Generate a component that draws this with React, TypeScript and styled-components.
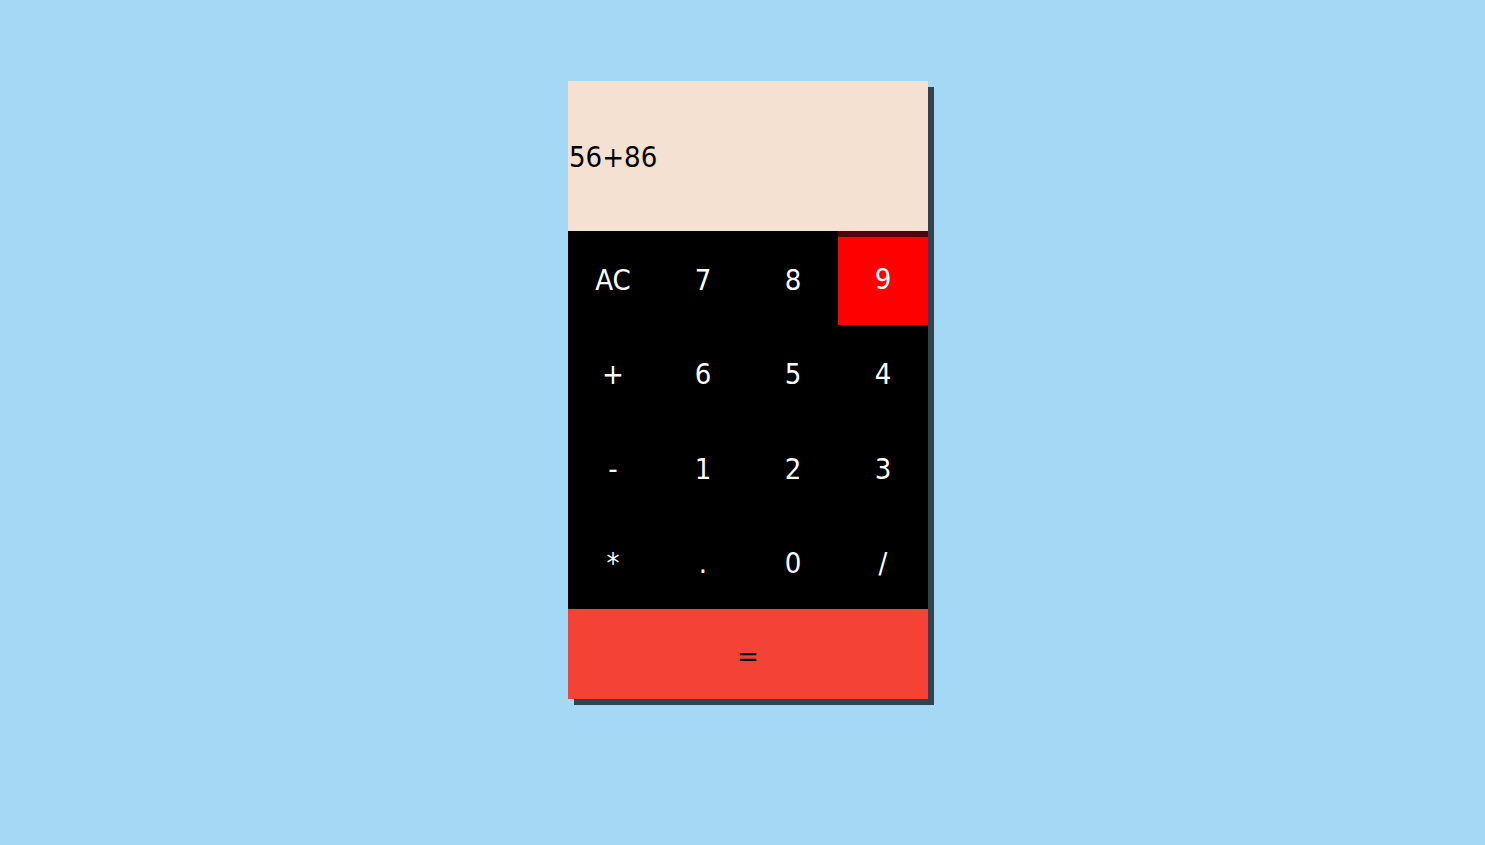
import React, { useState } from "react";
import styled, { createGlobalStyle } from "styled-components";

const Global = createGlobalStyle`
  html, body { margin: 0; padding: 0; }
  body {
    background: #a4d8f4;
    font-family: "DejaVu Sans Condensed", "DejaVu Sans", sans-serif;
    min-height: 845px;
  }
`;

const Page = styled.div`
  display: flex;
  justify-content: center;
  padding: 81px 0 0 11px;
`;

const Calculator = styled.div`
  width: 360px;
  display: flex;
  flex-direction: column;
  box-shadow: 6px 6px 0 #314550;
`;

const Display = styled.div`
  height: 150px;
  box-sizing: border-box;
  padding: 2px 0 0 1px;
  background: #f5e1d2;
  display: flex;
  align-items: center;
  font-size: 29px;
  color: #000;
`;

const Keys = styled.div`
  display: grid;
  grid-template-columns: repeat(4, 90px);
  grid-template-rows: repeat(4, 94.5px);
  background: #000;
`;

const Key = styled.button<{ $active?: boolean }>`
  border: none;
  margin: 0;
  padding: 3px 0 0 0;
  font-family: inherit;
  font-size: 29px;
  color: #fff;
  background: ${(p) => (p.$active ? "#ff0000" : "#000")};
  border-top: ${(p) => (p.$active ? "6px solid #550000" : "0")};
  border-bottom: ${(p) => (p.$active ? "0.5px solid #000" : "0")};
  display: flex;
  align-items: center;
  justify-content: center;
  cursor: pointer;
`;

const KeyLabel = styled.span<{ $shift?: boolean }>`
  display: block;
  transform: ${(p) => (p.$shift ? "translateY(-3px)" : "none")};
`;

const Equals = styled.button`
  height: 90px;
  border: none;
  padding: 3px 0 0 0;
  background: #f44336;
  font-family: inherit;
  font-size: 29px;
  color: #000;
  cursor: pointer;
`;

const keys = ["AC", "7", "8", "9", "+", "6", "5", "4", "-", "1", "2", "3", "*", ".", "0", "/"];

export default function App() {
  const [expr] = useState("56+86");
  return (
    <>
      <Global />
      <Page>
        <Calculator>
          <Display>{expr}</Display>
          <Keys>
            {keys.map((k) => (
              <Key key={k} $active={k === "9"}>
                <KeyLabel $shift={k === "9"}>{k}</KeyLabel>
              </Key>
            ))}
          </Keys>
          <Equals>=</Equals>
        </Calculator>
      </Page>
    </>
  );
}
